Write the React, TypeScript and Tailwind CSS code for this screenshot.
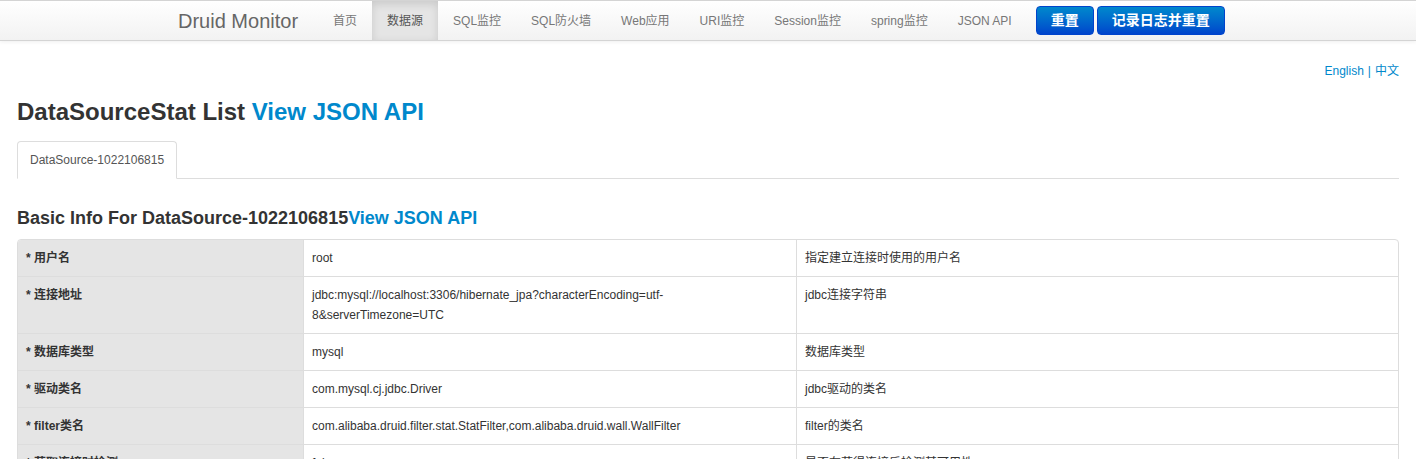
import React from "react";

const rows: { label: string; value: React.ReactNode; desc: string }[] = [
  { label: "* 用户名", value: "root", desc: "指定建立连接时使用的用户名" },
  {
    label: "* 连接地址",
    value: (
      <>
        jdbc:mysql://localhost:3306/hibernate_jpa?characterEncoding=utf-
        <br />
        8&amp;serverTimezone=UTC
      </>
    ),
    desc: "jdbc连接字符串",
  },
  { label: "* 数据库类型", value: "mysql", desc: "数据库类型" },
  { label: "* 驱动类名", value: "com.mysql.cj.jdbc.Driver", desc: "jdbc驱动的类名" },
  {
    label: "* filter类名",
    value: "com.alibaba.druid.filter.stat.StatFilter,com.alibaba.druid.wall.WallFilter",
    desc: "filter的类名",
  },
  { label: "* 获取连接时检测", value: "false", desc: "是否在获得连接后检测其可用性" },
];

const navItems = ["首页", "数据源", "SQL监控", "SQL防火墙", "Web应用", "URI监控", "Session监控", "spring监控", "JSON API"];

export default function App() {
  return (
    <div
      className="min-h-[459px] bg-white text-[#333] text-[12px] leading-[20px]"
      style={{ fontFamily: '"Liberation Sans", Arial, "Noto Sans CJK SC", sans-serif' }}
    >
      {/* navbar */}
      <div className="h-[41px] border-t border-b border-[#d4d4d4] bg-gradient-to-b from-white to-[#f2f2f2] shadow-[0_1px_4px_rgba(0,0,0,0.065)]">
        <div className="flex h-[39px] items-stretch pl-[158px]">
          <div className="flex items-center px-[20px] text-[20px] text-[#666]">Druid Monitor</div>
          {navItems.map((n, i) => (
            <div
              key={n}
              className={
                i === 1
                  ? "flex items-center px-[15px] text-[12px] text-[#555] bg-[#e5e5e5] shadow-[inset_0_3px_8px_rgba(0,0,0,0.125)]"
                  : "flex items-center px-[15px] text-[12px] text-[#777]"
              }
            >
              {n}
            </div>
          ))}
          <div className="ml-[9px] flex items-center gap-[3px] pb-[1px]">
            <div className="flex h-[29px] items-center rounded-[4px] border border-[#0044cc] bg-gradient-to-b from-[#0088cc] to-[#0044cc] px-[14px] text-[14px] font-bold text-white">
              重置
            </div>
            <div className="flex h-[29px] items-center rounded-[4px] border border-[#0044cc] bg-gradient-to-b from-[#0088cc] to-[#0044cc] px-[14px] text-[14px] font-bold text-white">
              记录日志并重置
            </div>
          </div>
        </div>
      </div>

      <div className="pl-[17px] pr-[17px]">
        <div className="flex justify-end pt-[20px] text-[12px] leading-[20px] text-[#0088cc]">
          <span>English</span>
          <span className="mx-[4px]">|</span>
          <span>中文</span>
        </div>

        <h1 className="mt-[16px] text-[24px] font-bold leading-[30px] text-[#333]">
          DataSourceStat List <span className="text-[#0088cc]">View JSON API</span>
        </h1>

        <div className="mt-[14px] flex border-b border-[#ddd]">
          <div className="-mb-px rounded-t-[4px] border border-[#ddd] border-b-white bg-white px-[12px] pt-[8px] pb-[8px] text-[12px] leading-[20px] text-[#555]">
            DataSource-1022106815
          </div>
        </div>

        <h3 className="mt-[27px] text-[18px] font-bold leading-[24px] text-[#333]">
          Basic Info For DataSource-1022106815<span className="text-[#0088cc]">View JSON API</span>
        </h3>

        <div className="mt-[9px] overflow-hidden rounded-[4px] border border-[#ddd]">
          {rows.map((r, i) => (
            <div key={i} className={i === 0 ? "flex" : "flex border-t border-[#ddd]"}>
              <div className="w-[285px] shrink-0 bg-[#e5e5e5] px-[8px] py-[8px] font-bold">{r.label}</div>
              <div className="w-[493px] shrink-0 border-l border-[#ddd] px-[8px] py-[8px]">{r.value}</div>
              <div className="flex-1 border-l border-[#ddd] px-[8px] py-[8px]">{r.desc}</div>
            </div>
          ))}
        </div>
      </div>
    </div>
  );
}
